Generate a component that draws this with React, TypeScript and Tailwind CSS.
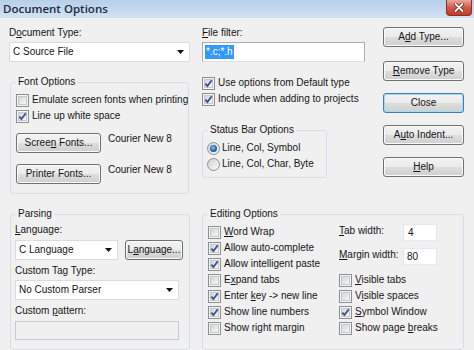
import React from 'react';

const Check = ({ checked = false }: { checked?: boolean }) => (
  <span className="relative w-[13px] h-[13px] shrink-0 border border-[#8e8f8f] bg-[#f4f4f4] p-[1px] flex">
    <span className="flex-1 border border-[#c5c9ce] bg-gradient-to-br from-[#d2d5da] to-[#f7f7f7]" />
    {checked && (
      <svg className="absolute left-0 top-0" width="11" height="11" viewBox="0 0 11 11">
        <path d="M2.3 5.6 L4.4 8 L8.8 2.2" fill="none" stroke="#3d5592" strokeWidth="1.9" />
      </svg>
    )}
  </span>
);

const Radio = ({ on = false }: { on?: boolean }) => (
  <span className="w-[13px] h-[13px] shrink-0 rounded-full border border-[#8e8f8f] bg-gradient-to-br from-[#cfd2d7] to-[#f8f8f8] flex items-center justify-center">
    {on && (
      <span className="w-[7px] h-[7px] rounded-full bg-[radial-gradient(circle_at_45%_40%,#9fd6f4_0%,#2c6fb6_45%,#173f73_100%)]" />
    )}
  </span>
);

const Btn = ({
  children,
  className = '',
  primary = false,
}: {
  children: React.ReactNode;
  className?: string;
  primary?: boolean;
}) => (
  <div
    className={`h-[20px] rounded-[3px] border flex items-center justify-center whitespace-nowrap bg-[linear-gradient(#f2f2f2_0%,#ebebeb_50%,#dddddd_51%,#cfcfcf_100%)] ${
      primary ? 'border-[#3c7fb1] shadow-[inset_0_0_0_1px_#9fdcf6]' : 'border-[#707070] shadow-[inset_0_0_0_1px_#fbfbfb]'
    } ${className}`}
  >
    {children}
  </div>
);

const Combo = ({ text, className = '' }: { text: string; className?: string }) => (
  <div className={`h-[20px] bg-white border border-[#dcdcdc] flex items-center pl-[3px] pr-[5px] ${className}`}>
    <span className="flex-1">{text}</span>
    <svg width="7" height="4" viewBox="0 0 7 4">
      <polygon points="0,0 7,0 3.5,4" fill="#111" />
    </svg>
  </div>
);

const CheckRow = ({ checked = false, children }: { checked?: boolean; children: React.ReactNode }) => (
  <div className="h-[16px] flex items-center gap-[3px] whitespace-nowrap">
    <Check checked={checked} />
    <span>{children}</span>
  </div>
);

const Group = ({
  title,
  className = '',
  children,
}: {
  title: string;
  className?: string;
  children: React.ReactNode;
}) => (
  <fieldset className={`border border-[#d5dfe5] rounded-[3px] pl-[4px] ${className}`}>
    <legend className="ml-[1px] px-[2px] leading-[12px]">{title}</legend>
    {children}
  </fieldset>
);

export default function App() {
  return (
    <div className="w-[474px] h-[350px] overflow-hidden bg-[#f0f0f0] font-['Liberation_Sans',Arial,sans-serif] text-[10px] leading-[12px] text-[#151515]">
      {/* Title bar */}
      <div className="h-[18px] flex justify-between bg-gradient-to-b from-[#b6cfe9] to-[#d3e3f3]">
        <span className="pl-[3px] font-['Open_Sans',sans-serif] text-[11.5px] font-semibold leading-[17px] text-[#1f2a3a]">
          Document Options
        </span>
        <div className="w-[26px] h-[16px] mr-[2px] rounded-b-[4px] border border-t-0 border-[#8a3128] bg-gradient-to-b from-[#e7a89d] via-[#d0584a] to-[#c03a2c] flex items-center justify-center">
          <svg width="10" height="9" viewBox="0 0 10 9">
            <path d="M1.5 1 L8.5 8 M8.5 1 L1.5 8" stroke="#5a1a14" strokeWidth="3.2" strokeLinecap="round" />
            <path d="M1.5 1 L8.5 8 M8.5 1 L1.5 8" stroke="#ffffff" strokeWidth="1.8" strokeLinecap="round" />
          </svg>
        </div>
      </div>

      {/* Top section */}
      <div className="flex">
        {/* Left column */}
        <div className="ml-[9px] w-[181px] pt-[9px]">
          <div>
            D<u>o</u>cument Type:
          </div>
          <Combo text="C Source File" className="mt-[3px]" />
          <Group title="Font Options" className="mt-[14px] mx-[1px] pb-[9px]">
            <div className="pt-[4px] pl-[1px]">
              <CheckRow>Emulate screen fonts when printing</CheckRow>
              <CheckRow checked>Line up white space</CheckRow>
            </div>
            <div className="mt-[9px] pl-[1px] flex items-start gap-[7px]">
              <Btn className="w-[85px]">
                <span>
                  Scree<u>n</u> Fonts...
                </span>
              </Btn>
              <span>Courier New 8</span>
            </div>
            <div className="mt-[11px] pl-[1px] flex items-start gap-[7px]">
              <Btn className="w-[85px]">Printer Fonts...</Btn>
              <span>Courier New 8</span>
            </div>
          </Group>
        </div>

        {/* Middle column */}
        <div className="ml-[12px] w-[163px] pt-[9px]">
          <div>
            <u>F</u>ile filter:
          </div>
          <div className="mt-[3px] h-[20px] bg-white border border-[#abadb3] border-b-[#dbe1e8] flex items-center pl-[2px]">
            <span className="bg-[#3399ff] text-white px-[1px] leading-[14px]">*.c;*.h</span>
          </div>
          <div className="mt-[13px]">
            <CheckRow checked>Use options from Default type</CheckRow>
            <CheckRow checked>Include when adding to projects</CheckRow>
          </div>
          <Group title="Status Bar Options" className="mt-[17px] w-[125px] pb-[5px]">
            <div className="pt-[4px]">
              <div className="h-[16px] flex items-center gap-[2px]">
                <Radio on />
                <span>Line, Col, Symbol</span>
              </div>
              <div className="h-[16px] flex items-center gap-[2px]">
                <Radio />
                <span>Line, Col, Char, Byte</span>
              </div>
            </div>
          </Group>
        </div>

        {/* Buttons */}
        <div className="ml-[18px] w-[81px] pt-[9px] flex flex-col">
          <Btn>
            <span>
              A<u>d</u>d Type...
            </span>
          </Btn>
          <Btn className="mt-[14px]">
            <span>
              <u>R</u>emove Type
            </span>
          </Btn>
          <Btn primary className="mt-[12px]">
            Close
          </Btn>
          <Btn className="mt-[12px]">
            <span>
              A<u>u</u>to Indent...
            </span>
          </Btn>
          <Btn className="mt-[12px]">
            <span>
              <u>H</u>elp
            </span>
          </Btn>
        </div>
      </div>

      {/* Bottom section */}
      <div className="flex mt-[14px]">
        <Group title="Parsing" className="ml-[10px] w-[180px] h-[142px]">
          <div className="pt-[4px]">
            <u>L</u>anguage:
          </div>
          <div className="mt-[4px] flex gap-[7px]">
            <Combo text="C Language" className="w-[103px]" />
            <Btn className="w-[58px]">
              <span>
                L<u>a</u>nguage...
              </span>
            </Btn>
          </div>
          <div className="mt-[5px]">Custom Tag Type:</div>
          <Combo text="No Custom Parser" className="mt-[3px] w-[164px]" />
          <div className="mt-[5px]">
            Custom <u>p</u>attern:
          </div>
          <div className="mt-[4px] w-[164px] h-[19px] border border-[#c9cbd0] bg-[#f0f0f0]" />
        </Group>

        <Group title="Editing Options" className="ml-[12px] w-[262px] h-[142px]">
          <div className="pt-[4px] pl-[1px] flex">
            <div className="w-[131px]">
              <CheckRow>
                <u>W</u>ord Wrap
              </CheckRow>
              <CheckRow checked>Allow auto-complete</CheckRow>
              <CheckRow checked>Allow intelligent paste</CheckRow>
              <CheckRow>
                E<u>x</u>pand tabs
              </CheckRow>
              <CheckRow checked>
                Enter <u>k</u>ey -&gt; new line
              </CheckRow>
              <CheckRow checked>Show line numbers</CheckRow>
              <CheckRow>Show right margin</CheckRow>
            </div>
            <div className="flex-1">
              <div className="h-[17px] flex items-center">
                <span className="w-[64px] -mt-[3px]">
                  <u>T</u>ab width:
                </span>
                <div className="w-[34px] h-[17px] bg-white border border-[#e3e9ef] pl-[4px] leading-[15px]">4</div>
              </div>
              <div className="mt-[7px] h-[17px] flex items-center">
                <span className="w-[64px] -mt-[3px]">
                  <u>M</u>argin width:
                </span>
                <div className="w-[34px] h-[17px] bg-white border border-[#e3e9ef] pl-[3px] leading-[15px]">80</div>
              </div>
              <div className="mt-[7px]">
                <CheckRow>
                  <u>V</u>isible tabs
                </CheckRow>
                <CheckRow>
                  V<u>i</u>sible spaces
                </CheckRow>
                <CheckRow checked>
                  <u>S</u>ymbol Window
                </CheckRow>
                <CheckRow>
                  Show page <u>b</u>reaks
                </CheckRow>
              </div>
            </div>
          </div>
        </Group>
      </div>
    </div>
  );
}
